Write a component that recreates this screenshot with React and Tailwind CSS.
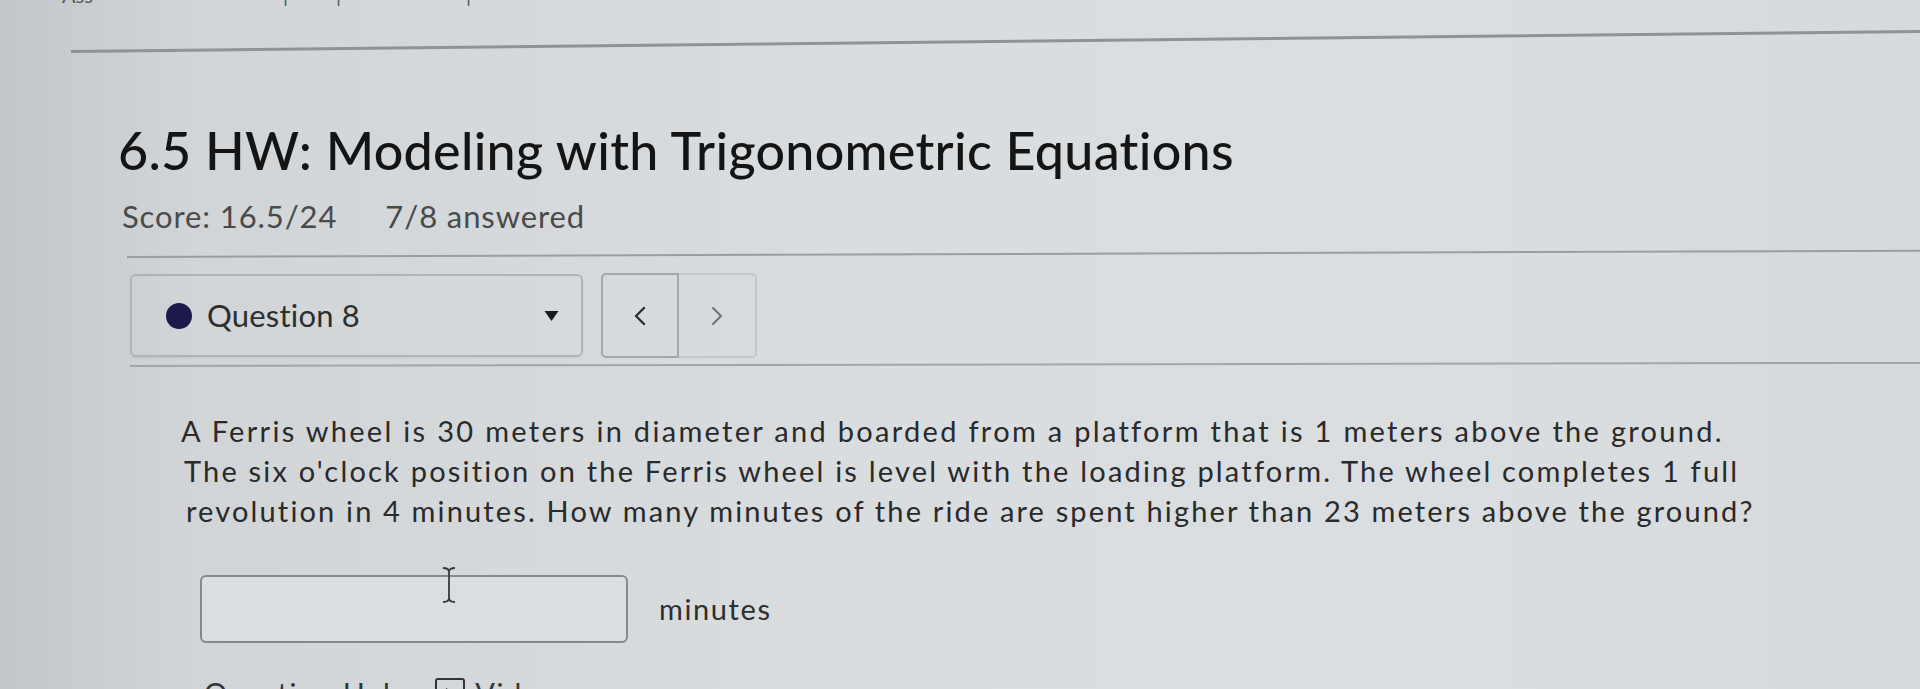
import React from "react";
import { ChevronLeft, ChevronRight } from "lucide-react";

export default function App() {
  return (
    <div className="relative h-[689px] w-[1920px] overflow-hidden bg-[linear-gradient(90deg,#c3c7cb_0%,#d1d5d8_10%,#d9dde0_45%,#dadee1_75%,#d6dadd_100%)] font-['Lato',sans-serif] text-[#1e1e1e]">
      {/* cut-off top nav */}
      <div className="-mt-[15px] flex h-[20px] items-end gap-[40px] pl-[62px] text-[20px] leading-[20px] text-[#555]">
        <span>Ass</span>
        <span className="ml-[150px]">|</span>
        <span className="ml-[8px]">|</span>
        <span className="ml-[85px]">|</span>
      </div>

      <div className="ml-[71px] mt-[45px] h-[3px] origin-left -rotate-[0.62deg] bg-[#8f9296]" />

      <div className="pl-[118px]">
        <h1 className="mt-[66px] text-[52px] font-medium leading-[62px] tracking-[0.3px] text-[#141414]">
          6.5 HW: Modeling with Trigonometric Equations
        </h1>
        <div className="mt-[17px] flex text-[31px] leading-[37px] tracking-[0.9px] text-[#4a4a4a]">
          <span className="ml-[4px]">Score: 16.5/24</span>
          <span className="ml-[48px]">7/8 answered</span>
        </div>

        <div className="ml-[9px] mt-[21px] h-[2px] origin-left -rotate-[0.2deg] bg-[#9a9da1]" />

        <div className="ml-[12px] mt-[16px] flex items-start">
          <div className="flex h-[83px] w-[453px] items-center rounded-[6px] border-2 border-[#b0b3b7] pl-[34px] pr-[22px] shadow-[0_1px_2px_rgba(0,0,0,0.08)]">
            <span className="h-[26px] w-[26px] rounded-full bg-[#1b1a4a]" />
            <span className="ml-[15px] text-[31px] leading-none tracking-[0.2px] text-[#2e2e2e]">Question 8</span>
            <svg className="ml-auto" width="15" height="12" viewBox="0 0 15 12">
              <path d="M0.5 1 L14.5 1 L7.5 11 Z" fill="#1a1a1a" />
            </svg>
          </div>
          <div className="ml-[18px] -mt-[1px] flex h-[85px]">
            <div className="flex w-[78px] items-center justify-center rounded-l-[5px] border-2 border-[#a3a6aa] text-[#2a2a2a]">
              <ChevronLeft size={32} strokeWidth={1.7} />
            </div>
            <div className="flex w-[78px] items-center justify-center rounded-r-[5px] border-2 border-l-0 border-[#c4c7ca] text-[#707070]">
              <ChevronRight size={32} strokeWidth={1.5} />
            </div>
          </div>
        </div>

        <div className="ml-[12px] mt-[7px] h-[2px] origin-left -rotate-[0.1deg] bg-[#a2a5a9]" />

        <div className="ml-[63px] mt-[44px] text-[29px] leading-[40px] tracking-[2.3px] text-[#2a2a2a]">
          <div>A Ferris wheel is 30 meters in diameter and boarded from a platform that is 1 meters above the ground.</div>
          <div className="ml-[3px] tracking-[2.2px]">The six o'clock position on the Ferris wheel is level with the loading platform. The wheel completes 1 full</div>
          <div className="ml-[5px] tracking-[2.15px]">revolution in 4 minutes. How many minutes of the ride are spent higher than 23 meters above the ground?</div>
        </div>

        <div className="ml-[82px] mt-[44px] flex items-center">
          <div className="h-[68px] w-[428px] rounded-[6px] border-2 border-[#85888c] bg-[#dadee1]" />
          <span className="ml-[31px] text-[29px] tracking-[1.6px] text-[#2e2e2e]">minutes</span>
        </div>

        <div className="ml-[86px] mt-[30px] flex items-center text-[29px] leading-[40px] tracking-[1.6px] text-[#333]">
          <span>Question Help:</span>
          <span className="ml-[17px] flex h-[30px] w-[30px] items-center justify-center rounded-[3px] border-2 border-[#333]">
            <svg width="14" height="14" viewBox="0 0 14 14"><path d="M3 2 L12 7 L3 12 Z" fill="#333" /></svg>
          </span>
          <span className="ml-[10px]">Video</span>
        </div>
      </div>

      {/* text cursor over input */}
      <svg className="absolute left-[440px] top-[566px]" width="18" height="38" viewBox="0 0 18 38">
        <path d="M3 2 Q9 2 9 6 Q9 2 15 2 M9 6 L9 32 M3 36 Q9 36 9 32 Q9 36 15 36" stroke="#3a3a3a" strokeWidth="1.8" fill="none" />
      </svg>
    </div>
  );
}
